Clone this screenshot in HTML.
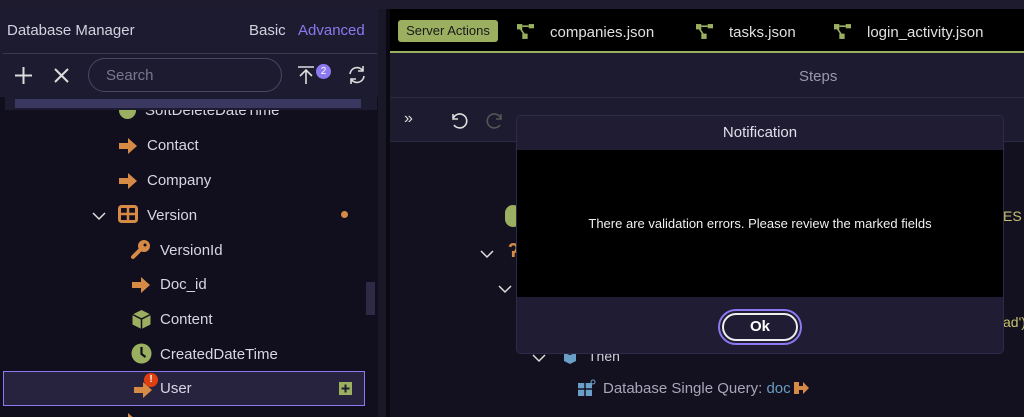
<!DOCTYPE html>
<html style="overflow:hidden;width:1024px;height:417px"><head><meta charset="utf-8"><style>
*{margin:0;padding:0;box-sizing:border-box}
body{width:1024px;height:417px;overflow:hidden;background:#13111f;font-family:"Liberation Sans",sans-serif;position:relative;color:#d8d6e4}
.a{position:absolute}
.t{font-size:15px;white-space:nowrap}
svg{position:absolute;overflow:visible}
</style></head><body>
<svg width="0" height="0"><defs>
<symbol id="arr" viewBox="0 0 20 20"><path d="M1 7h9V2l9 8-9 8v-5H1z" fill="#d68a46"/></symbol>
<symbol id="chev" viewBox="0 0 14 14"><path d="M1 4l6 6 6-6" fill="none" stroke="#ddd" stroke-width="1.5"/></symbol>
<symbol id="flow" viewBox="0 0 16 16"><rect x="0" y="1" width="5" height="5" fill="#9ab060"/><rect x="11" y="1" width="5" height="4" fill="#9ab060"/><rect x="5" y="10" width="5" height="5" fill="#9ab060"/><path d="M5 3h6M3 5l4 6" stroke="#9ab060" stroke-width="1.5"/></symbol>
</defs></svg>
<div class="a" style="left:0;top:0;width:1024px;height:9px;background:#1d1b2d"></div>
<!-- left panel -->
<div class="a" style="left:0;top:9px;width:378px;height:408px;background:#110f1d"></div>
<div class="a" style="left:0;top:9px;width:378px;height:88px;background:#1d1b2f"></div>
<div class="a t" style="left:7px;top:22px;color:#d2d2e0">Database Manager</div>
<div class="a t" style="left:249px;top:22px;color:#d2d2e0">Basic</div>
<div class="a t" style="left:298px;top:22px;color:#8c78f0">Advanced</div>
<div class="a" style="left:3px;top:53px;width:374px;height:1px;background:#3a384c"></div>
<svg style="left:15px;top:67px" width="17" height="17"><path d="M8.5 0v17M0 8.5h17" stroke="#ddd" stroke-width="2"/></svg>
<svg style="left:55px;top:69px" width="13" height="13"><path d="M0 0l13 13M13 0L0 13" stroke="#ddd" stroke-width="2"/></svg>
<div class="a" style="left:88px;top:58px;width:194px;height:34px;border:1px solid #4a4860;border-radius:17px"></div>
<div class="a t" style="left:106px;top:67px;color:#7a7890">Search</div>
<svg style="left:298px;top:66px" width="16" height="18"><path d="M0 1h16M8 4v14M2 10l6-6 6 6" fill="none" stroke="#ddd" stroke-width="1.6"/></svg>
<div class="a" style="left:316px;top:64px;width:15px;height:15px;border-radius:8px;background:#8c78f0;color:#fff;font-size:10px;text-align:center;line-height:15px">2</div>
<svg style="left:347px;top:65px" width="20" height="20"><path d="M3 9a7 7 0 0 1 13-3M17 11a7 7 0 0 1-13 3M16 1v5h-5M4 19v-5h5" fill="none" stroke="#ddd" stroke-width="1.6"/></svg>
<div class="a" style="left:5px;top:97px;width:372px;height:13px;background:#1d1b2f"></div>
<div class="a" style="left:15px;top:99px;width:346px;height:9px;background:#3a3760"></div>
<div class="a" style="left:366px;top:282px;width:9px;height:33px;background:#2c2a44"></div>
<div class="a" style="left:378px;top:9px;width:8px;height:408px;background:#1a1828"></div>
<div class="a" style="left:386px;top:9px;width:4px;height:408px;background:#0b0a12"></div>
<!-- tree -->
<div class="a" style="left:119px;top:110px;width:17px;height:9px;border-radius:0 0 9px 9px;background:#9ab060"></div>
<div class="a" style="left:145px;top:110px;width:220px;height:10px;overflow:hidden"><div class="t" style="margin-top:-8px;color:#d8d6e4">SoftDeleteDateTime</div></div>
<svg style="left:118px;top:136px" width="20" height="20"><use href="#arr"/></svg><div class="a t" style="left:147px;top:137px">Contact</div>
<svg style="left:118px;top:171px" width="20" height="20"><use href="#arr"/></svg><div class="a t" style="left:147px;top:172px">Company</div>
<svg style="left:92px;top:209px" width="14" height="14"><use href="#chev"/></svg>
<svg style="left:118px;top:205px" width="20" height="18"><rect x="1.5" y="1.5" width="17" height="15" rx="2" fill="none" stroke="#d68a46" stroke-width="3"/><path d="M2 9h16M10 2v14" stroke="#d68a46" stroke-width="2.5"/></svg>
<div class="a t" style="left:147px;top:207px">Version</div>
<div class="a" style="left:341px;top:211px;width:7px;height:7px;border-radius:4px;background:#d68a46"></div>
<svg style="left:131px;top:239px" width="20" height="20"><circle cx="13" cy="7" r="6" fill="#d68a46"/><path d="M10 10L2 18" stroke="#d68a46" stroke-width="4" stroke-linecap="round"/><circle cx="14" cy="6" r="1.5" fill="#110f1d"/></svg>
<div class="a t" style="left:160px;top:242px">VersionId</div>
<svg style="left:131px;top:275px" width="20" height="20"><use href="#arr"/></svg><div class="a t" style="left:160px;top:276px">Doc_id</div>
<svg style="left:131px;top:309px" width="21" height="21"><path d="M10.5 1l9 4.5v10l-9 4.5-9-4.5v-10z" fill="#9ab060"/><path d="M1.5 5.5l9 4.5 9-4.5M10.5 10v10" stroke="#110f1d" stroke-width="1.5" fill="none"/></svg>
<div class="a t" style="left:160px;top:311px">Content</div>
<svg style="left:131px;top:343px" width="21" height="21"><circle cx="10.5" cy="10.5" r="10" fill="#9ab060"/><path d="M10.5 4v7l4 3" stroke="#110f1d" stroke-width="2.2" fill="none"/></svg>
<div class="a t" style="left:160px;top:346px">CreatedDateTime</div>
<div class="a" style="left:3px;top:371px;width:362px;height:35px;background:#27233f;border:1px solid #8c78f0"></div>
<svg style="left:133px;top:380px" width="20" height="20"><use href="#arr"/></svg>
<div class="a" style="left:144px;top:373px;width:14px;height:14px;border-radius:7px;background:#e04010;color:#fff;font-size:10px;font-weight:bold;text-align:center;line-height:14px">!</div>
<div class="a t" style="left:160px;top:380px">User</div>
<svg style="left:339px;top:382px" width="13" height="13"><rect width="13" height="13" fill="#9ab060"/><path d="M6.5 2.5v8M2.5 6.5h8" stroke="#1d1b2f" stroke-width="2"/></svg>
<div class="a" style="left:118px;top:411px;width:20px;height:6px;overflow:hidden"><svg style="left:0;top:0" width="20" height="20"><use href="#arr"/></svg></div>
<!-- right -->
<div class="a" style="left:390px;top:9px;width:634px;height:43px;background:#000"></div>
<div class="a" style="left:390px;top:51px;width:634px;height:2px;background:#9ab060"></div>
<div class="a" style="left:398px;top:20px;width:100px;height:22px;background:#9ab060;border-radius:3px;color:#1a1a1a;font-size:13px;text-align:center;line-height:22px">Server Actions</div>
<svg style="left:517px;top:23px" width="17" height="17"><use href="#flow"/></svg><div class="a t" style="left:550px;top:24px;color:#e0e0e0">companies.json</div>
<svg style="left:696px;top:23px" width="17" height="17"><use href="#flow"/></svg><div class="a t" style="left:729px;top:24px;color:#e0e0e0">tasks.json</div>
<svg style="left:834px;top:23px" width="17" height="17"><use href="#flow"/></svg><div class="a t" style="left:867px;top:24px;color:#e0e0e0">login_activity.json</div>
<div class="a" style="left:390px;top:53px;width:634px;height:88px;background:#1d1b2f"></div>
<div class="a" style="left:390px;top:97px;width:634px;height:1px;background:#2c2a3e"></div>
<div class="a" style="left:390px;top:141px;width:634px;height:1px;background:#2c2a3e"></div>
<div class="a t" style="left:799px;top:68px;color:#9a98aa">Steps</div>
<div class="a" style="left:404px;top:110px;color:#ddd;font-size:16px">»</div>
<svg style="left:449px;top:111px" width="19" height="19"><path d="M4 3v5h5M4 8a7 7 0 1 1 1 6" fill="none" stroke="#ddd" stroke-width="1.6"/></svg>
<svg style="left:486px;top:111px" width="19" height="19"><path d="M15 3v5h-5M15 8a7 7 0 1 0-1 6" fill="none" stroke="#555" stroke-width="1.6"/></svg>
<div class="a" style="left:505px;top:205px;width:16px;height:22px;border-radius:11px;background:#9ab060"></div>
<div class="a" style="left:1003px;top:208px;color:#c8c070;font-size:14px">ES</div>
<div class="a" style="left:1003px;top:314px;color:#c8c070;font-size:14px">ad')</div>
<svg style="left:480px;top:247px" width="14" height="14"><use href="#chev"/></svg>
<div class="a" style="left:508px;top:240px;color:#d68a46;font-size:20px;font-weight:bold">ʔ</div>
<svg style="left:498px;top:282px" width="14" height="14"><use href="#chev"/></svg>
<svg style="left:532px;top:351px" width="14" height="14"><use href="#chev"/></svg>
<svg style="left:563px;top:350px" width="14" height="14"><path d="M1 3l6 2 6-2v8l-6 3-6-3z" fill="#6aa0c8"/></svg>
<div class="a" style="left:588px;top:348px;font-size:14px;color:#d0d0d8">Then</div>
<svg style="left:578px;top:380px" width="18" height="16"><rect x="0" y="3" width="14" height="13" fill="#6aa0c8"/><path d="M0 9h14M7 3v13" stroke="#13111f" stroke-width="1.5"/><circle cx="15" cy="2" r="2" fill="none" stroke="#6aa0c8"/></svg>
<div class="a t" style="left:603px;top:380px;color:#a8a6b8">Database Single Query: <span style="color:#6a9cc0">doc</span></div>
<svg style="left:793px;top:381px" width="16" height="14"><path d="M1 1h5v12H1zM6 5h4V1l6 6-6 6V9H6" fill="#d68a46"/></svg>
<!-- modal -->
<div class="a" style="left:516px;top:115px;width:488px;height:239px;background:#1f1c33;border:1px solid #2e2b48;border-radius:5px;overflow:hidden">
<div class="a" style="left:0;top:8px;width:100%;text-align:center;font-size:15px;color:#e0e0e8">Notification</div>
<div class="a" style="left:0;top:34px;width:100%;height:147px;background:#000"></div>
<div class="a" style="left:0;top:100px;width:100%;text-align:center;font-size:13px;color:#f0f0f0">There are validation errors. Please review the marked fields</div>
<div class="a" style="left:201px;top:193px;width:84px;height:36px;border:2px solid #8c78f0;border-radius:18px;padding:2px"><div style="width:100%;height:100%;border:2px solid #eee;border-radius:14px;text-align:center;line-height:24px;font-size:15px;font-weight:bold;color:#fff">Ok</div></div>
</div>
</body></html>
